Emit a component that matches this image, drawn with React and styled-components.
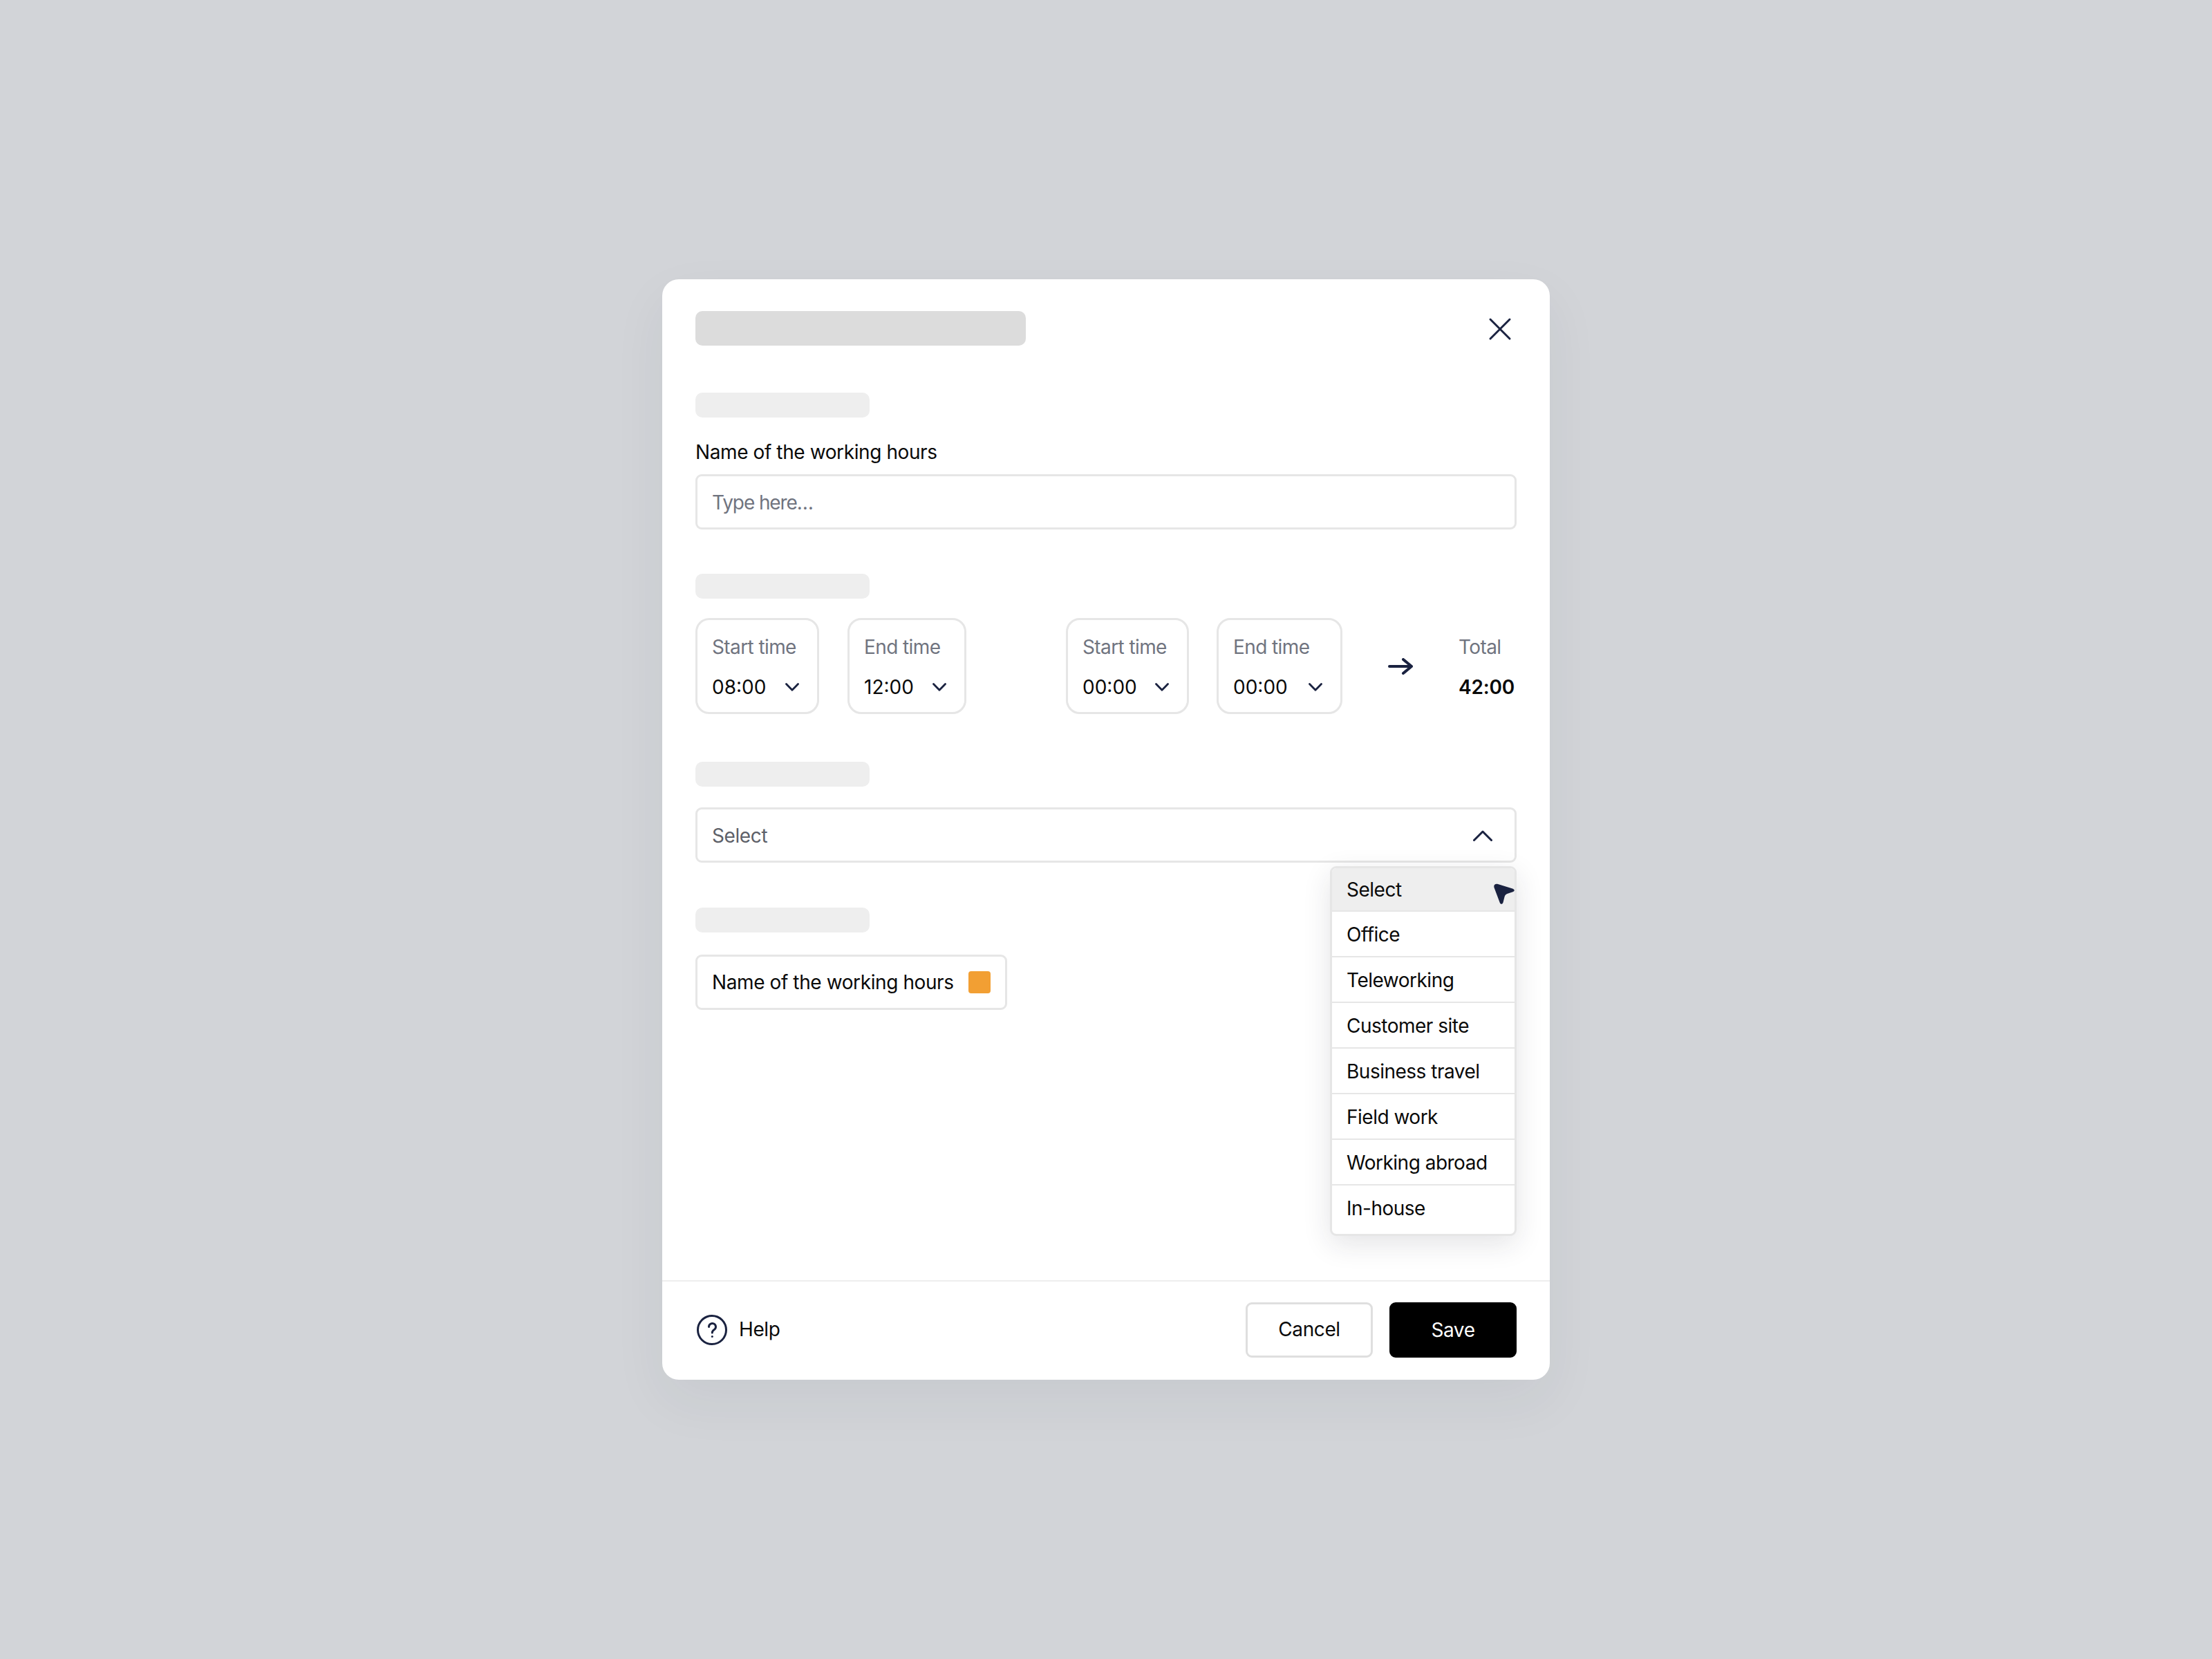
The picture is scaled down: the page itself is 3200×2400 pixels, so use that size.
import React from 'react'
import styled, { createGlobalStyle } from 'styled-components'

const GlobalStyle = createGlobalStyle`
  html, body {
    margin: 0;
    background: #d2d4d8;
    font-family: Inter, "Liberation Sans", sans-serif;
    letter-spacing: -0.4px;
    color: #0a0a0a;
  }
  * { box-sizing: border-box; }
`

const OPTIONS = ['Select', 'Office', 'Teleworking', 'Customer site', 'Business travel', 'Field work', 'Working abroad', 'In-house']

const ChevronDown = () => (
  <svg width="20" height="12" viewBox="0 0 20 12" fill="none" stroke="#1a2240" strokeWidth="2.8" strokeLinecap="round" strokeLinejoin="round">
    <path d="M1.5 1.5 10 10.2 18.5 1.5" />
  </svg>
)

const UpIcon = styled.svg`
  margin-right: 11px;
`

const ChevronUp = () => (
  <UpIcon width="28" height="16" viewBox="0 0 28 16" fill="none" stroke="#1a2240" strokeWidth="3" strokeLinecap="round" strokeLinejoin="round">
    <path d="M1.5 14.5 14 2 26.5 14.5" />
  </UpIcon>
)

const ArrowRight = () => (
  <svg width="36" height="24" viewBox="0 0 36 24" fill="none" stroke="#1a2240" strokeWidth="4" strokeLinecap="round" strokeLinejoin="round">
    <path d="M2 12H34M22 2 34 12 22 22" />
  </svg>
)

const CloseIcon = () => (
  <svg width="48" height="48" viewBox="0 0 48 48" fill="none" stroke="#1a2240" strokeWidth="3" strokeLinecap="round">
    <path d="M10 11 38 39M38 11 10 39" />
  </svg>
)

const HelpIcon = () => (
  <svg width="44" height="44" viewBox="0 0 44 44" fill="none" stroke="#1a2240" strokeWidth="3" strokeLinecap="round">
    <circle cx="22" cy="22" r="20.5" />
    <path d="M17.5 17.5a5 5 0 1 1 7.8 4.1c-1.9 1.3-3 2.2-3 4.4" />
    <circle cx="22.3" cy="31.5" r="1.5" fill="#1a2240" stroke="none" />
  </svg>
)

const Page = styled.div`
  min-height: 100vh;
  display: flex;
  align-items: center;
  justify-content: center;
`

const Modal = styled.div`
  width: 1284px;
  height: 1592px;
  background: #fff;
  border-radius: 24px;
  box-shadow: 0 30px 80px rgba(40, 44, 60, 0.06);
  display: flex;
  flex-direction: column;
`

const Body = styled.div`
  flex: 1;
  padding: 46px 48px 0;
`

const Header = styled.div`
  display: flex;
  align-items: center;
  justify-content: space-between;
  height: 50px;
`

const Skeleton = styled.div`
  width: ${props => props.$width}px;
  height: ${props => props.$height}px;
  margin-top: ${props => props.$top || 0}px;
  background: ${props => props.$dark ? '#dcdcdc' : '#eeeeee'};
  border-radius: 10px;
`

const FieldLabel = styled.div`
  margin-top: 33px;
  height: 34px;
  margin-bottom: 15px;
  font-size: 28px;
  line-height: 34px;
`

const Field = styled.div`
  height: 80px;
  padding: 2px 21px 0;
  display: flex;
  align-items: center;
  justify-content: space-between;
  background: #fff;
  border: 3px solid #e6e6e6;
  border-radius: 9px;
  font-size: 28px;
  color: ${props => props.$color};
`

const Placeholder = styled.span`
  letter-spacing: -1.1px;
`

const SelectWrap = styled.div`
  position: relative;
  margin-top: 30px;
`

const TimeRow = styled.div`
  display: flex;
  align-items: center;
  margin-top: 28px;
`

const TimeBox = styled.div`
  width: ${props => props.$width}px;
  height: 139px;
  margin-left: ${props => props.$left || 0}px;
  padding: 19px 26px 0 21px;
  border: 3px solid #e6e6e6;
  border-radius: 20px;
`

const TimeLabel = styled.div`
  font-size: 28px;
  line-height: 40px;
  letter-spacing: -0.6px;
  white-space: nowrap;
  color: #70747f;
`

const TimeValue = styled.div`
  display: flex;
  align-items: center;
  justify-content: space-between;
  margin-top: 18px;
  font-size: 28px;
  line-height: 40px;
  letter-spacing: 0;
`

const ArrowCell = styled.div`
  display: flex;
  margin: 0 66px;
`

const Total = styled.div`
  font-size: 28px;
  line-height: 40px;
  padding-top: 2px;
`

const TotalValue = styled.div`
  margin-top: 18px;
  font-weight: 600;
  letter-spacing: -0.2px;
`

const Menu = styled.ul`
  position: absolute;
  top: calc(100% + 5px);
  right: 0;
  width: 270px;
  margin: 0;
  padding: 0;
  list-style: none;
  background: #fff;
  border: 3px solid #e6e6e6;
  border-radius: 9px;
  box-shadow: 0 12px 40px rgba(30, 34, 50, 0.12);
  overflow: hidden;
`

const MenuItem = styled.li`
  height: 66px;
  padding: 2px 21px 0;
  display: flex;
  align-items: center;
  font-size: 28px;
  letter-spacing: -0.5px;
  border-bottom: 2px solid #e6e6e6;

  &:first-child {
    height: 63px;
    padding-top: 0;
    background: #eeeeee;
  }

  &:last-of-type {
    height: 70px;
    padding: 0 21px 4px;
    border-bottom: none;
  }
`

const Pointer = styled.svg`
  position: absolute;
  top: 22px;
  right: 0;
`

const Tag = styled.div`
  display: inline-flex;
  align-items: center;
  gap: 21px;
  height: 80px;
  margin-top: 32px;
  padding: 0 21px;
  border: 3px solid #e6e6e6;
  border-radius: 9px;
  font-size: 28px;
`

const Swatch = styled.span`
  width: 32px;
  height: 32px;
  background: #f29f33;
  border-radius: 4px;
`

const Footer = styled.div`
  height: 144px;
  padding: 0 48px 2px;
  display: flex;
  align-items: center;
  justify-content: space-between;
  border-top: 2px solid #eeeeee;
`

const HelpLink = styled.div`
  display: flex;
  align-items: center;
  gap: 17px;
  margin-left: 2px;
  font-size: 28px;
`

const HelpText = styled.span`
  padding-bottom: 2px;
`

const Actions = styled.div`
  display: flex;
  gap: 24px;
`

const Button = styled.button`
  width: 184px;
  height: 80px;
  padding: 0 0 ${props => props.$primary ? 0 : 3}px;
  font-family: inherit;
  font-size: 28px;
  letter-spacing: inherit;
  border-radius: 9px;
  border: 3px solid ${props => props.$primary ? '#000' : '#dfdfdf'};
  background: ${props => props.$primary ? '#000' : '#fff'};
  color: ${props => props.$primary ? '#fff' : '#0a0a0a'};
`

const times = [
  { label: 'Start time', value: '08:00', width: 179 },
  { label: 'End time', value: '12:00', width: 172, left: 41 },
  { label: 'Start time', value: '00:00', width: 178, left: 144 },
  { label: 'End time', value: '00:00', width: 182, left: 40 },
]

export default function App() {
  return (
    <Page>
      <GlobalStyle />
      <Modal>
        <Body>
          <Header>
            <Skeleton $dark $width={478} $height={50} />
            <CloseIcon />
          </Header>

          <Skeleton $top={68} $width={252} $height={36} />
          <FieldLabel>Name of the working hours</FieldLabel>
          <Field $color="#70747f"><Placeholder>Type here…</Placeholder></Field>

          <Skeleton $top={64} $width={252} $height={36} />
          <TimeRow>
            {times.map((t, i) => (
              <TimeBox key={i} $width={t.width} $left={t.left}>
                <TimeLabel>{t.label}</TimeLabel>
                <TimeValue>{t.value}<ChevronDown /></TimeValue>
              </TimeBox>
            ))}
            <ArrowCell><ArrowRight /></ArrowCell>
            <Total>
              <TimeLabel>Total</TimeLabel>
              <TotalValue>42:00</TotalValue>
            </Total>
          </TimeRow>

          <Skeleton $top={69} $width={252} $height={36} />
          <SelectWrap>
            <Field $color="#5d6068">Select<ChevronUp /></Field>
            <Menu>
              {OPTIONS.map(o => (
                <MenuItem key={o}>{o}</MenuItem>
              ))}
              <Pointer width="30" height="30" viewBox="0 0 30 30" fill="#1a2240">
                <path d="M.5 6C-.5 2 2 0 6 1L27 7.5C30.5 8.7 30.5 11.3 27.5 12.3L20 14.8C17.5 15.6 16.2 17 15.5 19.5L13.5 27.5C12.6 30.6 9.7 30.6 8.7 27.8Z" />
              </Pointer>
            </Menu>
          </SelectWrap>

          <Skeleton $top={65} $width={252} $height={36} />
          <Tag>Name of the working hours<Swatch /></Tag>
        </Body>
        <Footer>
          <HelpLink><HelpIcon /><HelpText>Help</HelpText></HelpLink>
          <Actions>
            <Button>Cancel</Button>
            <Button $primary>Save</Button>
          </Actions>
        </Footer>
      </Modal>
    </Page>
  )
}
